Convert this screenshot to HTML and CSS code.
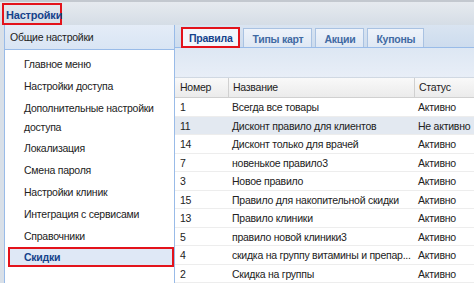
FILE: index.html
```html
<!DOCTYPE html>
<html lang="ru">
<head>
<meta charset="utf-8">
<link rel="stylesheet" href="styles.css">
</head>
<body>
<div class="app">
  <div class="topbar"><span class="title">Настройки</span></div>
  <div class="main">
    <div class="sidebar">
      <div class="side-head">Общие настройки</div>
      <ul class="menu">
        <li>Главное меню</li>
        <li>Настройки доступа</li>
        <li class="two">Дополнительные настройки доступа</li>
        <li>Локализация</li>
        <li>Смена пароля</li>
        <li>Настройки клиник</li>
        <li>Интеграция с сервисами</li>
        <li>Справочники</li>
        <li class="sel">Скидки</li>
      </ul>
    </div>
    <div class="content">
      <div class="tabs">
        <span class="tab active">Правила</span>
        <span class="tab">Типы карт</span>
        <span class="tab">Акции</span>
        <span class="tab">Купоны</span>
      </div>
      <div class="toolbar"></div>
      <div class="grid">
        <div class="row head"><span class="c1">Номер</span><span class="c2">Название</span><span class="c3">Статус</span></div>
        <div class="row"><span class="c1">1</span><span class="c2">Всегда все товары</span><span class="c3">Активно</span></div>
        <div class="row hl"><span class="c1">11</span><span class="c2">Дисконт правило для клиентов</span><span class="c3">Не активно</span></div>
        <div class="row"><span class="c1">14</span><span class="c2">Дисконт только для врачей</span><span class="c3">Активно</span></div>
        <div class="row"><span class="c1">7</span><span class="c2">новенькое правило3</span><span class="c3">Активно</span></div>
        <div class="row"><span class="c1">3</span><span class="c2">Новое правило</span><span class="c3">Активно</span></div>
        <div class="row"><span class="c1">15</span><span class="c2">Правило для накопительной скидки</span><span class="c3">Активно</span></div>
        <div class="row"><span class="c1">13</span><span class="c2">Правило клиники</span><span class="c3">Активно</span></div>
        <div class="row"><span class="c1">5</span><span class="c2">правило новой клиники3</span><span class="c3">Активно</span></div>
        <div class="row"><span class="c1">4</span><span class="c2">скидка на группу витамины и препар...</span><span class="c3">Активно</span></div>
        <div class="row"><span class="c1">2</span><span class="c2">Скидка на группы</span><span class="c3">Активно</span></div>
      </div>
    </div>
  </div>
</div>
</body>
</html>
```

FILE: styles.css
```css
html, body {
  margin: 0;
  padding: 0;
  background: #ffffff;
}
body {
  font-family: "Liberation Sans", Arial, sans-serif;
  font-size: 10.5px;
  letter-spacing: -0.25px;
  color: #222;
  width: 474px;
  height: 283px;
  overflow: hidden;
}
.app {
  display: flex;
  flex-direction: column;
  height: 283px;
  background: #d9e0e8;
}
.topbar {
  height: 25px;
  box-sizing: border-box;
  border-top: 2px solid #c3c8cf;
  background: linear-gradient(#e6eaef, #d5dde6);
  padding: 1px 0 0 2px;
  display: flex;
}
.title {
  border: 2px solid #e3131b;
  font-weight: bold;
  color: #15428b;
  font-size: 11px;
  letter-spacing: -0.2px;
  padding: 3px 0 0 2px;
  height: 22px;
  box-sizing: border-box;
  line-height: 14px;
  width: 60px;
}
.main {
  flex: 1;
  display: flex;
  padding-left: 4px;
  min-height: 0;
}
.sidebar {
  width: 169px;
  background: #fff;
  border-left: 1px solid #99bbe8;
  border-right: 1px solid #99bbe8;
  display: flex;
  flex-direction: column;
}
.side-head {
  height: 24px;
  line-height: 24px;
  padding-left: 5px;
  background: linear-gradient(#e4ecf7, #d9e5f4);
  border-bottom: 1px solid #99bbe8;
  color: #222;
}
.menu {
  list-style: none;
  margin: 0;
  padding: 3px 0 0 0;
}
.menu li {
  padding-left: 19px;
  line-height: 22px;
  height: 22px;
}
.menu li.two {
  height: 40px;
  line-height: 19px;
  padding-top: 2px;
  padding-right: 12px;
  box-sizing: border-box;
}
.menu li.sel {
  margin: 0 0 0 3px;
  height: 20px;
  line-height: 16px;
  padding-left: 14px;
  box-sizing: border-box;
  border: 2px solid #e3131b;
  background: #dfe8f6;
  font-weight: bold;
  color: #15428b;
}
.content {
  flex: 1;
  display: flex;
  flex-direction: column;
  background: #fff;
  min-width: 0;
}
.tabs {
  height: 23px;
  box-sizing: border-box;
  background: linear-gradient(#d9e4f1, #cddcee);
  border-bottom: 1px solid #99bbe8;
  display: flex;
  align-items: flex-end;
  gap: 3px;
  padding-left: 6px;
}
.tab {
  height: 19px;
  box-sizing: border-box;
  border: 1px solid #a9c2e2;
  border-bottom: none;
  background: linear-gradient(#eef3fa, #dfe8f4);
  font-weight: bold;
  color: #416aa3;
  padding: 3px 8px 0 8px;
  line-height: 14px;
}
.tab.active {
  border: 2px solid #e3131b;
  background: #f2f6fb;
  color: #15428b;
  height: 21px;
  padding: 2px 6px 0 6px;
  margin-bottom: -1px;
}
.toolbar {
  height: 30px;
  background: linear-gradient(#dde7f3, #e8eef7);
  border-bottom: 1px solid #d0d8e2;
}
.grid {
  flex: 1;
  background: #fff;
}
.row {
  display: flex;
  height: 18.5px;
  line-height: 18px;
  border-bottom: 1px solid #ededed;
  box-sizing: border-box;
}
.row.head {
  height: 20px;
  line-height: 19px;
  background: linear-gradient(#f9f9f9, #ebebeb);
  border-bottom: 1px solid #d0d0d0;
}
.row.head span + span {
  border-left: 1px solid #d0d0d0;
}
.row.hl {
  background: #e3e9f1;
}
.c1 {
  width: 53px;
  padding-left: 5px;
  box-sizing: border-box;
}
.c2 {
  width: 186px;
  padding-left: 4px;
  box-sizing: border-box;
  white-space: nowrap;
  overflow: hidden;
}
.c3 {
  flex: 1;
  padding-left: 4px;
  white-space: nowrap;
}
```
